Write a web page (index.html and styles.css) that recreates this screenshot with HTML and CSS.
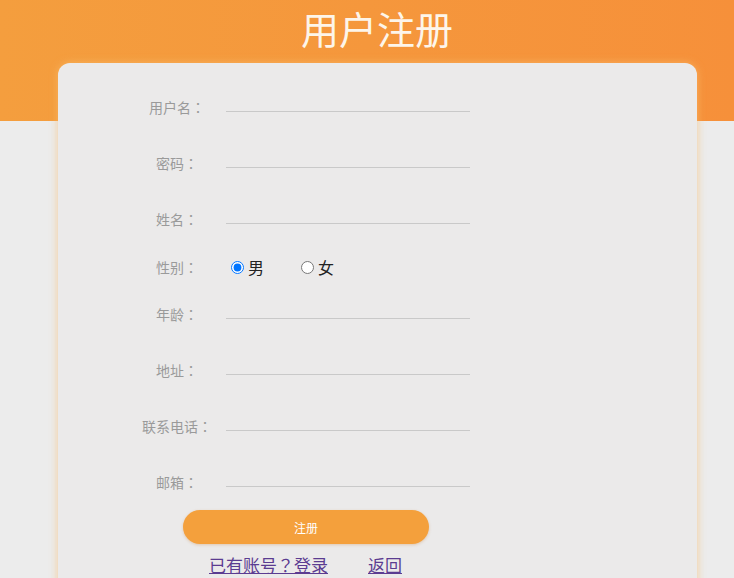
FILE: index.html
```html
<!DOCTYPE html>
<html lang="zh-CN">
<head>
    <meta charset="UTF-8">
    <meta name="viewport" content="width=device-width, initial-scale=1.0">
    <title>用户注册</title>
    <link rel="stylesheet" href="styles.css">
</head>
<body>
    <h1 class="title">用户注册</h1>

    <div class="card">
        <form class="reg-form" onsubmit="return false;">
            <div class="row">
                <label class="label">用户名<span class="punct" lang="zh-TW">：</span></label>
                <input type="text" class="field">
            </div>
            <div class="row">
                <label class="label">密码<span class="punct" lang="zh-TW">：</span></label>
                <input type="password" class="field">
            </div>
            <div class="row">
                <label class="label">姓名<span class="punct" lang="zh-TW">：</span></label>
                <input type="text" class="field">
            </div>
            <div class="row row-radio">
                <label class="label">性别<span class="punct" lang="zh-TW">：</span></label>
                <input type="radio" name="sex" id="male" checked>
                <label for="male" class="radio-text">男</label>
                <input type="radio" name="sex" id="female">
                <label for="female" class="radio-text">女</label>
            </div>
            <div class="row">
                <label class="label">年龄<span class="punct" lang="zh-TW">：</span></label>
                <input type="text" class="field">
            </div>
            <div class="row">
                <label class="label">地址<span class="punct" lang="zh-TW">：</span></label>
                <input type="text" class="field">
            </div>
            <div class="row">
                <label class="label">联系电话<span class="punct" lang="zh-TW">：</span></label>
                <input type="text" class="field">
            </div>
            <div class="row">
                <label class="label">邮箱<span class="punct" lang="zh-TW">：</span></label>
                <input type="text" class="field">
            </div>

            <button class="submit-btn">注册</button>

            <div class="links">
                <a href="#">已有账号<span class="punct" lang="zh-TW">？</span>登录</a>
                <a href="#">返回</a>
            </div>
        </form>
    </div>
</body>
</html>
```

FILE: styles.css
```css
* {
    margin: 0;
    padding: 0;
    box-sizing: border-box;
}

body {
    font-family: "Noto Sans CJK SC", "Noto Sans", sans-serif;
    background: linear-gradient(90deg, #f49e3e 0%, #f6903a 100%) top / 100% 121px no-repeat, #ececec;
    height: 578px;
    overflow: hidden;
}

.title {
    height: 63px;
    line-height: 56px;
    text-align: center;
    padding-left: 20px;
    font-size: 38px;
    font-weight: normal;
    color: #fdf5ea;
}

.card {
    margin-left: 58px;
    width: 639px;
    height: 540px;
    background: #ebeaea;
    border-radius: 12px 12px 0 0;
    box-shadow: 0 0 8px rgba(250, 190, 110, 0.7);
    padding-top: 16px;
}

.reg-form {
    padding-left: 83px;
}

.row {
    height: 56px;
    display: flex;
    align-items: center;
}

.row-radio {
    height: 39px;
}

.label {
    width: 72px;
    text-align: center;
    font-size: 14px;
    color: #9a9a9a;
    margin-right: 13px;
}

/* centred full-width punctuation like the original font */
.punct {
    font-family: "Noto Sans CJK TC", sans-serif;
}

.field {
    width: 244px;
    height: 20px;
    margin-bottom: 11px;
    border: none;
    border-bottom: 1px solid #c9c9c9;
    background: transparent;
    outline: none;
    font-size: 14px;
}

.row-radio input[type="radio"] {
    margin: 1px 4px 0 5px;
    width: 13px;
    height: 13px;
}

.radio-text {
    font-size: 16px;
    color: #222;
    margin-right: 32px;
}

.submit-btn {
    display: block;
    margin-left: 42px;
    width: 246px;
    height: 34px;
    border: none;
    border-radius: 17px;
    background: #f4a03c;
    color: #fff;
    font-size: 12px;
    font-family: inherit;
    box-shadow: 0 1px 3px rgba(200, 120, 40, 0.3);
}

.links {
    margin-top: 8px;
    padding-left: 68px;
    display: flex;
    gap: 40px;
    font-size: 17px;
}

.links a {
    color: #5b3c91;
}
```
